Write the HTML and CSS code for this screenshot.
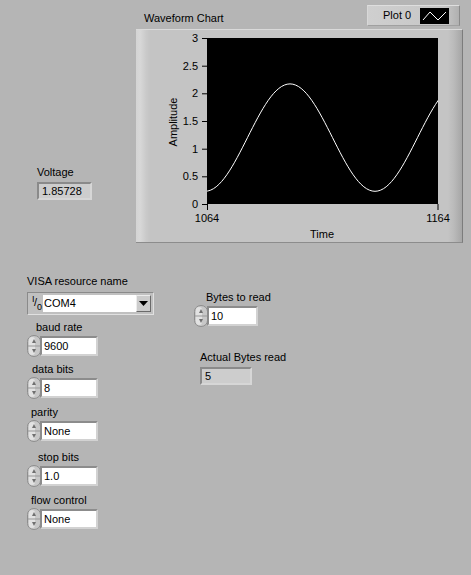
FILE: index.html
```html
<!DOCTYPE html>
<html>
<head>
<meta charset="utf-8">
<link rel="stylesheet" href="styles.css">
</head>
<body>
<div class="panel">

  <div class="chart-label">Waveform Chart</div>

  <div class="legend">
    <span class="legend-text">Plot 0</span>
    <svg class="swatch" width="29" height="16" viewBox="0 0 29 16">
      <rect width="29" height="16" fill="#000"/>
      <polyline points="3,12 10,4 18,12 26,4" fill="none" stroke="#fff" stroke-width="1"/>
    </svg>
  </div>

  <div class="chart-frame">
    <div class="y-title">Amplitude</div>
    <div class="y-labels">
      <span class="yl yl0">3</span>
      <span class="yl yl1">2.5</span>
      <span class="yl yl2">2</span>
      <span class="yl yl3">1.5</span>
      <span class="yl yl4">1</span>
      <span class="yl yl5">0.5</span>
      <span class="yl yl6">0</span>
    </div>
    <svg class="ticks" width="245" height="182" viewBox="0 0 245 182">
      <g stroke="#000" stroke-width="1">
        <line x1="9" y1="0.5" x2="14" y2="0.5"/>
        <line x1="9" y1="28.2" x2="14" y2="28.2"/>
        <line x1="9" y1="55.8" x2="14" y2="55.8"/>
        <line x1="9" y1="83.5" x2="14" y2="83.5"/>
        <line x1="9" y1="111.2" x2="14" y2="111.2"/>
        <line x1="9" y1="138.8" x2="14" y2="138.8"/>
        <line x1="9" y1="166.5" x2="14" y2="166.5"/>
        <line x1="14.5" y1="166" x2="14.5" y2="172"/>
        <line x1="245" y1="166" x2="245" y2="172"/>
      </g>
    </svg>
    <div class="plot">
      <svg width="231" height="166" viewBox="0 0 231 166">
        <path d="M-2 153.3 C13.38 153.3 26.64 127.11 40.5 99.6 C54.36 72.09 67.62 45.9 83 45.9 C98.38 45.9 111.64 72.09 125.5 99.6 C139.36 127.11 152.62 153.3 168 153.3 C183.38 153.3 196.64 127.11 210.5 99.6 C224.36 72.09 237.62 45.9 253 45.9" fill="none" stroke="#fff" stroke-width="1"/>
      </svg>
    </div>
    <span class="xl xl0">1064</span>
    <span class="xl xl1">1164</span>
    <span class="x-title">Time</span>
  </div>

  <div class="ctl voltage">
    <div class="lbl">Voltage</div>
    <div class="ind ind-voltage">1.85728</div>
  </div>

  <div class="ctl visa">
    <div class="lbl">VISA resource name</div>
    <div class="visa-box">
      <span class="io"><span class="io-i">I</span><span class="io-s">/</span><span class="io-o">0</span></span>
      <span class="visa-field">COM4</span>
      <span class="visa-btn">
        <svg width="9" height="5" viewBox="0 0 9 5"><polygon points="0,0 9,0 4.5,5" fill="#000"/></svg>
      </span>
    </div>
  </div>

  <div class="ctl num baud">
    <div class="lbl">baud rate</div>
    <div class="row">
      <span class="spin"><svg width="14" height="22" viewBox="0 0 14 22"><rect x="0.5" y="0.5" width="13" height="21" rx="6.5" ry="6" fill="#c8c8c8" stroke="#8e8e8e"/><rect x="2" y="2" width="6" height="18" rx="3" fill="#e2e2e2"/><line x1="1" y1="11" x2="13" y2="11" stroke="#999"/><polygon points="7,4 5,8 9,8" fill="#707070"/><polygon points="7,18 5,14 9,14" fill="#707070"/></svg></span>
      <span class="field w57">9600</span>
    </div>
  </div>

  <div class="ctl num databits">
    <div class="lbl">data bits</div>
    <div class="row">
      <span class="spin"><svg width="14" height="22" viewBox="0 0 14 22"><rect x="0.5" y="0.5" width="13" height="21" rx="6.5" ry="6" fill="#c8c8c8" stroke="#8e8e8e"/><rect x="2" y="2" width="6" height="18" rx="3" fill="#e2e2e2"/><line x1="1" y1="11" x2="13" y2="11" stroke="#999"/><polygon points="7,4 5,8 9,8" fill="#707070"/><polygon points="7,18 5,14 9,14" fill="#707070"/></svg></span>
      <span class="field w57">8</span>
    </div>
  </div>

  <div class="ctl num parity">
    <div class="lbl">parity</div>
    <div class="row">
      <span class="spin"><svg width="14" height="22" viewBox="0 0 14 22"><rect x="0.5" y="0.5" width="13" height="21" rx="6.5" ry="6" fill="#c8c8c8" stroke="#8e8e8e"/><rect x="2" y="2" width="6" height="18" rx="3" fill="#e2e2e2"/><line x1="1" y1="11" x2="13" y2="11" stroke="#999"/><polygon points="7,4 5,8 9,8" fill="#707070"/><polygon points="7,18 5,14 9,14" fill="#707070"/></svg></span>
      <span class="field w57">None</span>
    </div>
  </div>

  <div class="ctl num stopbits">
    <div class="lbl">stop bits</div>
    <div class="row">
      <span class="spin"><svg width="14" height="22" viewBox="0 0 14 22"><rect x="0.5" y="0.5" width="13" height="21" rx="6.5" ry="6" fill="#c8c8c8" stroke="#8e8e8e"/><rect x="2" y="2" width="6" height="18" rx="3" fill="#e2e2e2"/><line x1="1" y1="11" x2="13" y2="11" stroke="#999"/><polygon points="7,4 5,8 9,8" fill="#707070"/><polygon points="7,18 5,14 9,14" fill="#707070"/></svg></span>
      <span class="field w57">1.0</span>
    </div>
  </div>

  <div class="ctl num flow">
    <div class="lbl">flow control</div>
    <div class="row">
      <span class="spin"><svg width="14" height="22" viewBox="0 0 14 22"><rect x="0.5" y="0.5" width="13" height="21" rx="6.5" ry="6" fill="#c8c8c8" stroke="#8e8e8e"/><rect x="2" y="2" width="6" height="18" rx="3" fill="#e2e2e2"/><line x1="1" y1="11" x2="13" y2="11" stroke="#999"/><polygon points="7,4 5,8 9,8" fill="#707070"/><polygon points="7,18 5,14 9,14" fill="#707070"/></svg></span>
      <span class="field w57">None</span>
    </div>
  </div>

  <div class="ctl num bytes">
    <div class="lbl">Bytes to read</div>
    <div class="row">
      <span class="spin"><svg width="14" height="22" viewBox="0 0 14 22"><rect x="0.5" y="0.5" width="13" height="21" rx="6.5" ry="6" fill="#c8c8c8" stroke="#8e8e8e"/><rect x="2" y="2" width="6" height="18" rx="3" fill="#e2e2e2"/><line x1="1" y1="11" x2="13" y2="11" stroke="#999"/><polygon points="7,4 5,8 9,8" fill="#707070"/><polygon points="7,18 5,14 9,14" fill="#707070"/></svg></span>
      <span class="field w51">10</span>
    </div>
  </div>

  <div class="ctl actual">
    <div class="lbl">Actual Bytes read</div>
    <div class="ind ind-actual">5</div>
  </div>

</div>
</body>
</html>
```

FILE: styles.css
```css
html, body {
  margin: 0;
  padding: 0;
  background: #b5b5b5;
}
.panel {
  position: relative;
  width: 471px;
  height: 575px;
  overflow: hidden;
  background: #b5b5b5;
  font-family: "Liberation Sans", Arial, sans-serif;
  font-size: 11px;
  line-height: 13px;
  color: #000;
}

/* chart */
.chart-label {
  position: absolute;
  left: 144px;
  top: 12px;
}
.legend {
  box-sizing: border-box;
  position: absolute;
  left: 367px;
  top: 5px;
  width: 93px;
  height: 21px;
  display: flex;
  align-items: center;
  justify-content: space-between;
  padding: 0 10px 0 15px;
  background: linear-gradient(to right, #cfcfcf, #c6c6c6 85%, #b0b0b0);
  border-top: 1px solid #dedede;
  border-left: 1px solid #d8d8d8;
  border-right: 1px solid #8a8a8a;
  border-bottom: 1px solid #a0a0a0;
}
.swatch { display: block; }

.chart-frame {
  position: absolute;
  left: 136px;
  top: 29px;
  width: 326px;
  height: 212px;
  background: linear-gradient(to right, #d4d4d4 0, #d8d8d8 4px, #cacaca 10px, #c4c4c4 14px, #c4c4c4 312px, #bababa 318px, #a6a6a6 326px);
  border-top: 1px solid #dadada;
  border-right: 1px solid #7c7c7c;
  border-bottom: 1px solid #8c8c8c;
}
.plot {
  position: absolute;
  left: 71px;
  top: 8px;
  width: 231px;
  height: 166px;
  background: #000;
  overflow: hidden;
}
.plot svg { display: block; }
.ticks {
  position: absolute;
  left: 57px;
  top: 7.5px;
  overflow: visible;
}
.y-title {
  position: absolute;
  left: 37px;
  top: 92px;
  transform: translate(-50%, -50%) rotate(-90deg);
  white-space: nowrap;
}
.yl {
  position: absolute;
  right: 264px;
  transform: translateY(-50%);
}
.yl0 { top: 8px; }
.yl1 { top: 35.7px; }
.yl2 { top: 63.3px; }
.yl3 { top: 91px; }
.yl4 { top: 118.7px; }
.yl5 { top: 146.3px; }
.yl6 { top: 174px; }
.xl {
  position: absolute;
  top: 182px;
  transform: translateX(-50%);
}
.xl0 { left: 71px; }
.xl1 { left: 302px; }
.x-title {
  position: absolute;
  left: 186px;
  top: 198px;
  transform: translateX(-50%);
}

/* controls */
.ctl {
  position: absolute;
  display: flex;
  flex-direction: column;
  align-items: flex-start;
}
.lbl { white-space: nowrap; }

.ind {
  box-sizing: border-box;
  height: 18px;
  padding: 1px 0 0 3px;
  background: #cdcdcd;
  border-top: 2px solid #8a8a8a;
  border-left: 2px solid #8a8a8a;
  border-right: 2px solid #d6d6d6;
  border-bottom: 2px solid #d6d6d6;
  line-height: 13px;
}

.voltage { left: 37px; top: 166px; }
.ind-voltage { width: 55px; margin-top: 3px; }

.actual { left: 200px; top: 351px; }
.ind-actual { width: 52px; margin-top: 3px; }

.visa { left: 27px; top: 275px; }
.visa-box {
  margin-top: 4px;
  box-sizing: border-box;
  width: 127px;
  height: 23px;
  display: flex;
  align-items: center;
  padding: 2px;
  background: #c0c0c0;
  border-top: 1px solid #8a8a8a;
  border-left: 1px solid #8a8a8a;
  border-right: 1px solid #e0e0e0;
  border-bottom: 1px solid #e0e0e0;
}
.io {
  position: relative;
  width: 13px;
  height: 17px;
  flex: none;
  font-size: 9px;
  line-height: 9px;
}
.io-i { position: absolute; left: 2px; top: 0; }
.io-s { position: absolute; left: 4px; top: 3px; font-size: 11px; }
.io-o { position: absolute; left: 7px; top: 8px; }
.visa-field {
  flex: 1;
  height: 17px;
  line-height: 17px;
  padding-left: 1px;
  background: #fff;
}
.visa-btn {
  flex: none;
  box-sizing: border-box;
  width: 15px;
  height: 17px;
  display: flex;
  align-items: center;
  justify-content: center;
  background: #cccccc;
  border-top: 1px solid #ececec;
  border-left: 1px solid #ececec;
  border-right: 1px solid #6a6a6a;
  border-bottom: 1px solid #6a6a6a;
}
.visa-btn svg { display: block; }

.num { left: 27px; }
.row {
  display: flex;
  align-items: center;
  margin-top: 1px;
}
.spin { display: block; width: 14px; height: 22px; }
.spin svg { display: block; }
.field {
  box-sizing: border-box;
  height: 20px;
  padding: 1px 0 0 2px;
  background: #fff;
  border-top: 2px solid #8c8c8c;
  border-left: 2px solid #8c8c8c;
  border-right: 2px solid #d2d2d2;
  border-bottom: 2px solid #d2d2d2;
  line-height: 15px;
  margin-left: -1px;
}
.w57 { width: 58px; }
.w51 { width: 51px; }

.baud { top: 321px; }
.baud .lbl { padding-left: 9px; }
.databits { top: 363px; }
.databits .lbl { padding-left: 5px; }
.parity { top: 406px; }
.parity .lbl { padding-left: 4px; }
.stopbits { top: 451px; }
.stopbits .lbl { padding-left: 11px; }
.flow { top: 494px; }
.flow .lbl { padding-left: 4px; }
.bytes { left: 194px; top: 291px; }
.bytes .lbl { padding-left: 12px; }
```
